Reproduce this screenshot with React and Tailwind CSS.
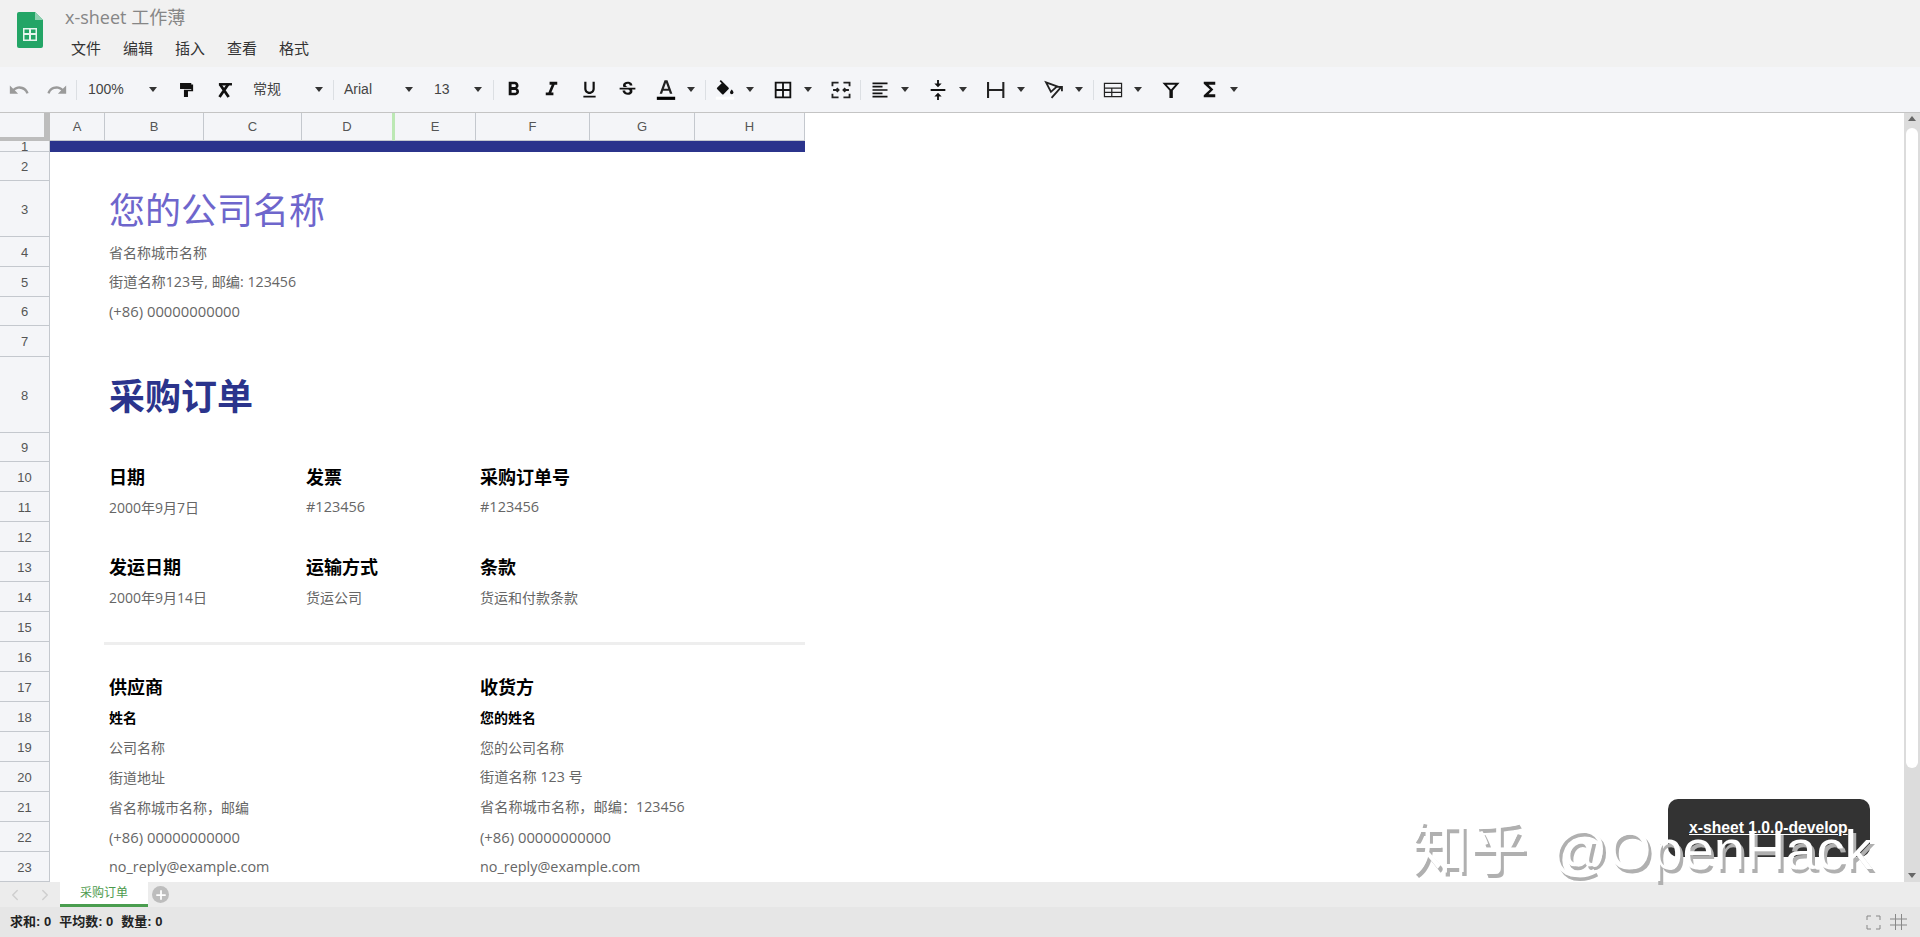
import React from "react";
import { ChevronLeft, ChevronRight, Plus } from "lucide-react";
import {
    MdUndo,
    MdRedo,
    MdFormatBold,
    MdFormatItalic,
    MdFormatUnderlined,
    MdStrikethroughS,
    MdBorderAll,
    MdFormatAlignLeft,
    MdVerticalAlignCenter,
    MdFunctions,
} from "react-icons/md";

const uiFont = "font-['Liberation_Sans','Noto_Sans_CJK_SC',sans-serif]";

function Svg({ children, className = "" }) {
    return (
        <svg width="22" height="22" viewBox="0 0 18 18" className={className}>
            {children}
        </svg>
    );
}

const PaintIcon = () => (
    <Svg>
        <path d="M3.300 3.300h9.200v1.200H14V10H9.800v4.700H6.500V8.800h6V8.200H3.300z" fill="#111" />
    </Svg>
);

const ClearIcon = () => (
    <Svg>
        <path d="M4 3.300h10.700v2H4z" fill="#111" />
        <path d="M5 4.500 12 14.700M11.500 4.500 4.500 14.700" stroke="#111" strokeWidth="2.300" fill="none" />
    </Svg>
);

const TextColorIcon = () => (
    <Svg>
        <path fillRule="evenodd" d="M7.800 1h2.400l4 11h-2l-.8-2.400H6.600L5.800 12h-2zM7.200 8h3.600L9 3z" fill="#222" />
        <rect x="1.500" y="14.500" width="15" height="2.600" fill="#000" />
    </Svg>
);

const FillIcon = () => (
    <Svg>
        <path d="M11.800 6.900 5.600.8 4.600 1.800l1.700 1.700-3.600 3.400a1 1 0 0 0 0 1.500l3.800 3.800a1 1 0 0 0 1.500 0l3.800-3.800a1 1 0 0 0 0-1.500z" fill="#111" />
        <path d="M14.500 8.500s-1.400 1.500-1.400 2.500a1.400 1.400 0 0 0 2.800 0c0-1-1.400-2.500-1.400-2.500z" fill="#111" />
        <rect x="1.500" y="14.500" width="15" height="2.400" fill="#fff" />
    </Svg>
);

const MergeIcon = () => (
    <Svg>
        <path d="M2 6V3h5M11 3h5v3M2 12v3h5M11 15h5v-3M2.500 9H7M15.500 9H11M5.500 7.500 7 9l-1.500 1.500M12.500 7.500 11 9l1.500 1.500" stroke="#222" strokeWidth="1.500" fill="none" />
    </Svg>
);

const WrapIcon = () => (
    <Svg>
        <path d="M2.500 2.500v13M15 2.500v13M2.500 9H15" stroke="#222" strokeWidth="1.700" fill="none" />
    </Svg>
);

const RotateIcon = () => (
    <Svg>
        <path d="M2.500 2.800 11.500 6 6.500 10.500z" stroke="#222" strokeWidth="1.500" fill="none" />
        <path d="M7 15.500 15 6.500M11.500 6.500H15.500V10" stroke="#222" strokeWidth="1.500" fill="none" />
    </Svg>
);

const TableIcon = () => (
    <Svg>
        <path d="M2 3.500h14v11H2zM2 7.500h14M2 11h14M8 7.500v7" stroke="#222" strokeWidth="1" fill="none" />
    </Svg>
);

const FilterIcon = () => (
    <Svg>
        <path fillRule="evenodd" d="M2 3h14l-5.500 6.500V15.500h-2.800V9.500zM5.500 4.800 9 8.500 12.500 4.800z" fill="#111" />
    </Svg>
);

function Caret() {
    return <span className="h-0 w-0 border-x-[4.5px] border-t-[5px] border-x-transparent border-t-[#333]" />;
}

function Sep() {
    return <div className="h-[20px] w-px bg-[#dcdfe3]" />;
}

function Btn({ children }) {
    return <div className="flex h-full w-[38px] items-center justify-center">{children}</div>;
}

function DropBtn({ children }) {
    return (
        <div className="flex h-full w-[58px] items-center">
            <Btn>{children}</Btn>
            <div className="flex w-[20px] pl-[2px]">
                <Caret />
            </div>
        </div>
    );
}

function Select({ label, className }) {
    return (
        <div className={"flex h-full items-center justify-between " + className}>
            <span>{label}</span>
            <Caret />
        </div>
    );
}

function Toolbar() {
    return (
        <div className="flex h-[46px] items-center border-b border-[#c4c4c4] bg-[#f4f5f8] text-[14px] text-[#444]">
            <Btn><MdUndo size={22} color="#9a9a9a" /></Btn>
            <Btn><MdRedo size={22} color="#9a9a9a" /></Btn>
            <Sep />
            <Select label="100%" className="w-[91px] pl-[11px] pr-[11px]" />
            <Btn><PaintIcon /></Btn>
            <Btn><ClearIcon /></Btn>
            <Select label="常规" className="w-[89px] pl-[9px] pr-[10px]" />
            <Sep />
            <Select label="Arial" className="w-[85px] pl-[10px] pr-[6px]" />
            <Select label="13" className="w-[74px] pl-[15px] pr-[11px]" />
            <Sep />
            <Btn><MdFormatBold size={23} color="#111" /></Btn>
            <Btn><MdFormatItalic size={23} color="#111" /></Btn>
            <Btn><MdFormatUnderlined size={21} color="#111" /></Btn>
            <Btn><MdStrikethroughS size={21} color="#111" /></Btn>
            <div className="ml-[1px] h-full">
                <DropBtn><TextColorIcon /></DropBtn>
            </div>
            <Sep />
            <DropBtn><FillIcon /></DropBtn>
            <DropBtn><MdBorderAll size={22} color="#111" /></DropBtn>
            <Btn><MergeIcon /></Btn>
            <Sep />
            <DropBtn><MdFormatAlignLeft size={20} color="#111" /></DropBtn>
            <DropBtn><MdVerticalAlignCenter size={22} color="#111" /></DropBtn>
            <DropBtn><WrapIcon /></DropBtn>
            <DropBtn><RotateIcon /></DropBtn>
            <Sep />
            <DropBtn><TableIcon /></DropBtn>
            <Btn><FilterIcon /></Btn>
            <DropBtn><MdFunctions size={23} color="#111" /></DropBtn>
        </div>
    );
}

function Logo() {
    return (
        <svg width="26" height="36" viewBox="0 0 26 36">
            <path d="M2 0h16l8 8v26a2 2 0 0 1-2 2H2a2 2 0 0 1-2-2V2a2 2 0 0 1 2-2z" fill="#23a566" />
            <path d="M18 0l8 8h-8z" fill="#8ed1b1" />
            <path fillRule="evenodd" d="M6 16h14v13H6zM7.500 17.500V21H12v-3.500zM14 17.500V21h4.500v-3.500zM7.500 23v4.500H12V23zM14 23v4.500h4.500V23z" fill="#e6f5ed" />
        </svg>
    );
}

const menus = ["文件", "编辑", "插入", "查看", "格式"];

function TitleBar() {
    return (
        <div className="flex h-[67px] bg-[#f1f1f1]">
            <div className="w-[65px] pl-[17px] pt-[12px]">
                <Logo />
            </div>
            <div className="flex flex-col">
                <div className="h-[33px] pt-[4px] text-[18px] leading-[27px] text-[#868686]">x-sheet 工作薄</div>
                <div className="flex gap-[22px] pl-[6px] pt-[3px] text-[15px] leading-[24px] text-[#333]">
                    {menus.map((m) => (
                        <span key={m}>{m}</span>
                    ))}
                </div>
            </div>
        </div>
    );
}

const cols = [
    { label: "A", w: "w-[55px]" },
    { label: "B", w: "w-[99px]" },
    { label: "C", w: "w-[98px]" },
    { label: "D", w: "w-[93px]" },
    { label: "E", w: "w-[81px]" },
    { label: "F", w: "w-[114px]" },
    { label: "G", w: "w-[105px]" },
    { label: "H", w: "w-[110px]" },
];

const small = "text-[14px] text-[#666]";
const mixed = "text-[14.2px] text-[#666]";
const phone = "text-[14.8px] text-[#666]";
const mail = "text-[14.4px] text-[#666]";
const code = "text-[14.5px] text-[#666]";
const head = "pt-[1px] text-[18px] font-bold text-black";
const name = "text-[14px] font-bold text-black";

const rows = [
    { n: 1, h: "h-[11px]", bar: true },
    { n: 2, h: "h-[29px]" },
    { n: 3, h: "h-[56px]", cells: [["您的公司名称", "pt-[3px] text-[36px] text-[#6e66cc]"]] },
    { n: 4, h: "h-[30px]", cells: [["省名称城市名称", small]] },
    { n: 5, h: "h-[30px]", cells: [["街道名称123号, 邮编: 123456", mixed]] },
    { n: 6, h: "h-[29px]", cells: [["(+86) 00000000000", phone]] },
    { n: 7, h: "h-[31px]" },
    { n: 8, h: "h-[76px]", cells: [["采购订单", "pt-[3px] text-[36px] font-bold text-[#2b348c]"]] },
    { n: 9, h: "h-[29px]" },
    { n: 10, h: "h-[30px]", cells: [["日期", head], ["发票", head], ["采购订单号", head]] },
    { n: 11, h: "h-[30px]", cells: [["2000年9月7日", small], ["#123456", code], ["#123456", code]] },
    { n: 12, h: "h-[30px]" },
    { n: 13, h: "h-[30px]", cells: [["发运日期", head], ["运输方式", head], ["条款", head]] },
    { n: 14, h: "h-[30px]", cells: [["2000年9月14日", small], ["货运公司", small], ["货运和付款条款", small]] },
    { n: 15, h: "h-[30px]" },
    { n: 16, h: "h-[30px]", rule: true },
    { n: 17, h: "h-[30px]", cells: [["供应商", head], null, ["收货方", head]] },
    { n: 18, h: "h-[30px]", cells: [["姓名", name], null, ["您的姓名", name]] },
    { n: 19, h: "h-[30px]", cells: [["公司名称", small], null, ["您的公司名称", small]] },
    { n: 20, h: "h-[30px]", cells: [["街道地址", small], null, ["街道名称 123 号", mixed]] },
    { n: 21, h: "h-[30px]", cells: [["省名称城市名称，邮编", small], null, ["省名称城市名称，邮编：123456", mixed]] },
    { n: 22, h: "h-[30px]", cells: [["(+86) 00000000000", phone], null, ["(+86) 00000000000", phone]] },
    { n: 23, h: "h-[30px]", cells: [["no_reply@example.com", mail], null, ["no_reply@example.com", mail]] },
];

function ColumnHeader() {
    return (
        <div className={"flex h-[28px] " + uiFont}>
            <div className="w-[50px] border-b-[4px] border-r-[6px] border-[#bdbdbd] bg-[#f4f5f8]" />
            {cols.map((c) => (
                <div
                    key={c.label}
                    className={
                        "flex items-center justify-center border-b border-r bg-[#f4f5f8] text-[13px] text-[#555] " +
                        c.w +
                        (c.label === "D" ? " border-r-[3px] border-r-[#bce8b4] border-b-[#c4c8ce]" : " border-[#c4c8ce]")
                    }
                >
                    {c.label}
                </div>
            ))}
        </div>
    );
}

function SheetRow({ row }) {
    return (
        <div className={"flex " + row.h}>
            <div className={"flex w-[50px] shrink-0 items-center justify-center overflow-hidden border-b border-r border-[#c4c8ce] bg-[#f4f5f8] pt-[2px] text-[13px] text-[#555] " + uiFont}>
                {row.n}
            </div>
            {row.bar && <div className="w-[755px] bg-[#2b348c]" />}
            {row.rule && (
                <div className="ml-[54px] w-[701px]">
                    <div className="h-[3px] bg-[#eeeeee]" />
                </div>
            )}
            {row.cells && (
                <div className="grid w-[755px] grid-cols-[54px_197px_174px_330px] items-center">
                    <div />
                    {row.cells.map((c, i) => (
                        <div key={i} className={c ? "whitespace-nowrap pl-[5px] " + c[1] : ""}>
                            {c && c[0]}
                        </div>
                    ))}
                </div>
            )}
        </div>
    );
}

function Scrollbar() {
    return (
        <div className="flex w-[16px] flex-col items-center bg-[#dcdcdc]">
            <span className="mt-[3px] h-0 w-0 border-x-[4.5px] border-b-[5px] border-x-transparent border-b-[#666]" />
            <div className="mt-[7px] h-[640px] w-[12px] rounded-t-[6px] rounded-b-[6px] bg-white" />
            <span className="mb-[4px] mt-auto h-0 w-0 border-x-[4.5px] border-t-[5px] border-x-transparent border-t-[#666]" />
        </div>
    );
}

function TabBar() {
    return (
        <div className="flex h-[25px] items-start bg-[#ececec]">
            <div className="flex w-[60px] items-center justify-between px-[6px] pt-[4px] text-[#cfcfcf]">
                <ChevronLeft size={18} />
                <ChevronRight size={18} />
            </div>
            <div className="flex h-[25px] w-[88px] items-center justify-center border-b-[3px] border-[#4a9d4f] bg-white text-[12px] text-[#4c9a4c]">
                采购订单
            </div>
            <div className="ml-[4px] mt-[4px] flex h-[17px] w-[17px] items-center justify-center rounded-full bg-[#bdbdbd]">
                <Plus size={14} color="#fff" strokeWidth={3} />
            </div>
        </div>
    );
}

function StatusBar() {
    return (
        <div className="flex h-[30px] items-center justify-between bg-[#e6e6e6] pl-[10px] pr-[13px] text-[13px] font-bold text-[#222]">
            <div className="flex gap-[8px]">
                <span>求和: 0</span>
                <span>平均数: 0</span>
                <span>数量: 0</span>
            </div>
            <div className="flex items-center gap-[9px]">
                <svg width="15" height="15" viewBox="0 0 15 15" fill="none" stroke="#888" strokeWidth="1">
                    <path d="M1 5V1h4M10 1h4v4M1 10v4h4M14 10v4h-4" />
                </svg>
                <svg width="17" height="16" viewBox="0 0 17 16" fill="none" stroke="#888" strokeWidth="1">
                    <path d="M5.500 0v16M11.500 0v16M0 5h17M0 11h17" />
                </svg>
            </div>
        </div>
    );
}

export default function App() {
    return (
        <div className="relative flex h-screen flex-col overflow-hidden bg-white font-['Open_Sans','Noto_Sans_CJK_SC',sans-serif]">
            <TitleBar />
            <div className={uiFont}>
                <Toolbar />
            </div>
            <div className="flex min-h-0 flex-1">
                <div className="flex-1">
                    <ColumnHeader />
                    {rows.map((r) => (
                        <SheetRow key={r.n} row={r} />
                    ))}
                </div>
                <Scrollbar />
            </div>
            <div className={uiFont}>
                <TabBar />
                <StatusBar />
            </div>

            <div className={"absolute left-[1668px] top-[799px] flex h-[58px] w-[202px] items-center rounded-[10px] bg-[#333333] pl-[21px] text-[15.7px] font-bold text-white underline " + uiFont}>
                x-sheet 1.0.0-develop
            </div>
            <div className={"absolute left-[1411px] top-[817px] whitespace-nowrap text-[56px] leading-[64px] text-white [text-shadow:3px_4px_0_#b0b0b0] " + uiFont}>
                <span className="text-[58px]">知乎</span>
                <span className="ml-[24px]">@OpenHack</span>
            </div>
        </div>
    );
}
